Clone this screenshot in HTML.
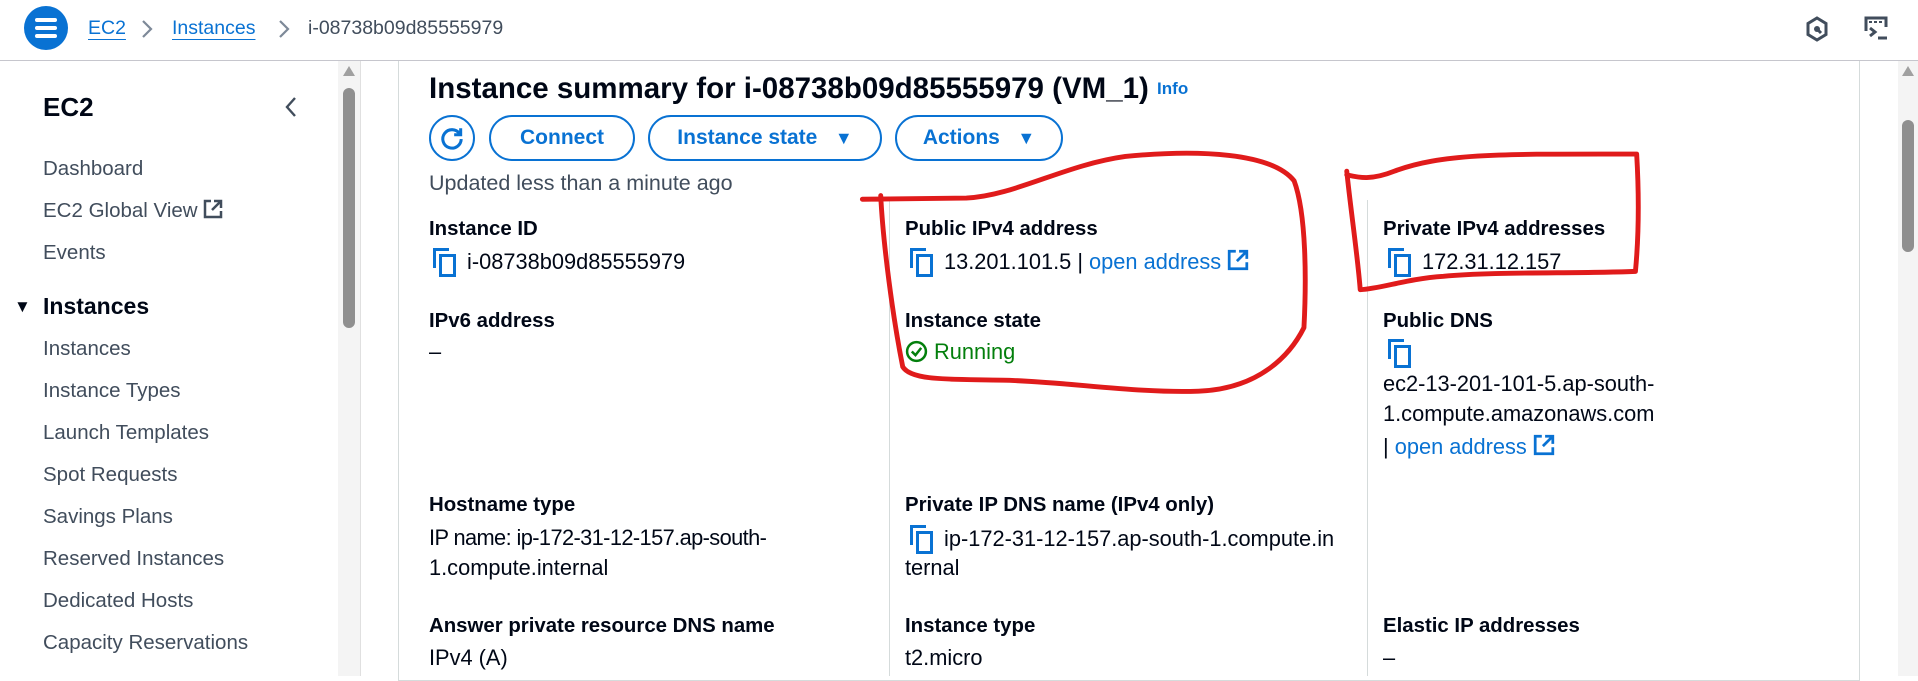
<!DOCTYPE html>
<html><head><meta charset="utf-8"><style>
*{margin:0;padding:0;box-sizing:border-box}
body{width:1918px;height:676px;overflow:hidden;background:#fff;font-family:"Liberation Sans",Arial,sans-serif;color:#000716;position:relative}
.a{position:absolute;white-space:nowrap}
.nav{font-size:20.5px;color:#414d5c;left:43px}
.lbl{font-size:20.4px;font-weight:bold}
.val{font-size:21.8px}
.lnk{color:#0972d3}
.btn{position:absolute;top:115px;height:46px;border:2.5px solid #0972d3;border-radius:23px;color:#0972d3;font-weight:bold;font-size:20px;display:flex;align-items:center;justify-content:center}
.cp{display:inline-block;width:22px;height:24px;position:relative;vertical-align:-3px;margin-right:12px}
.cp:before{content:"";position:absolute;left:0;top:0;width:13px;height:17px;border-left:3px solid #0972d3;border-top:3px solid #0972d3}
.cp:after{content:"";position:absolute;left:6px;top:6px;width:11px;height:17px;border:3px solid #0972d3}
</style></head><body>
<!-- header -->
<div class="a" style="left:24px;top:6px;width:44px;height:44px;border-radius:50%;background:#0972d3"></div>
<div class="a" style="left:35px;top:18px;width:22px;height:4px;background:#fff;border-radius:2px"></div>
<div class="a" style="left:35px;top:26px;width:22px;height:4px;background:#fff;border-radius:2px"></div>
<div class="a" style="left:35px;top:34px;width:22px;height:4px;background:#fff;border-radius:2px"></div>
<div class="a lnk" style="left:88px;top:17px;font-size:19.5px;text-decoration:underline;text-underline-offset:5px">EC2</div>
<svg class="a" style="left:141px;top:19px" width="12" height="20" viewBox="0 0 12 20"><path d="M2 2 L10 10 L2 18" fill="none" stroke="#7d8998" stroke-width="2.2"/></svg>
<div class="a lnk" style="left:172px;top:17px;font-size:19.5px;text-decoration:underline;text-underline-offset:5px">Instances</div>
<svg class="a" style="left:278px;top:19px" width="12" height="20" viewBox="0 0 12 20"><path d="M2 2 L10 10 L2 18" fill="none" stroke="#7d8998" stroke-width="2.2"/></svg>
<div class="a" style="left:308px;top:17px;font-size:19.5px;color:#414d5c">i-08738b09d85555979</div>
<svg class="a" style="left:1805px;top:16px" width="24" height="26" viewBox="0 0 24 26"><path d="M12 2 L21 7.5 V18.5 L12 24 L3 18.5 V7.5Z" fill="none" stroke="#414d5c" stroke-width="3"/><circle cx="12" cy="13" r="3" fill="#414d5c"/><path d="M12 13 L16 17" stroke="#414d5c" stroke-width="3"/></svg>
<svg class="a" style="left:1862px;top:15px" width="30" height="28" viewBox="0 0 30 28"><path d="M4 16 V3 H24 V12" fill="none" stroke="#414d5c" stroke-width="3"/><rect x="7" y="6" width="3" height="2" fill="#414d5c"/><rect x="12" y="6" width="3" height="2" fill="#414d5c"/><rect x="17" y="6" width="3" height="2" fill="#414d5c"/><path d="M8 13 L13 17 L8 21" fill="none" stroke="#414d5c" stroke-width="3"/><path d="M16 23 H25" stroke="#414d5c" stroke-width="3"/></svg>
<div class="a" style="left:0;top:60px;width:1918px;height:1px;background:#c6c6cd"></div>
<!-- sidebar -->
<div class="a" style="left:43px;top:92px;font-size:26px;font-weight:bold">EC2</div>
<svg class="a" style="left:284px;top:96px" width="14" height="22" viewBox="0 0 14 22"><path d="M11 2 L3 11 L11 20" fill="none" stroke="#414d5c" stroke-width="2.4"/></svg>
<div class="a nav" style="top:157px">Dashboard</div>
<div class="a nav" style="top:199px">EC2 Global View <svg width="20" height="20" viewBox="0 0 20 20" style="vertical-align:-2px"><path d="M8 2 H2 V18 H18 V12" fill="none" stroke="#414d5c" stroke-width="2.5"/><path d="M11 2 H18 V9 M18 2 L9 11" fill="none" stroke="#414d5c" stroke-width="2.5"/></svg></div>
<div class="a nav" style="top:241px">Events</div>
<div class="a" style="left:14px;top:297px;font-size:17px">&#9660;</div>
<div class="a" style="left:43px;top:293px;font-size:23px;font-weight:bold">Instances</div>
<div class="a nav" style="top:337px">Instances</div>
<div class="a nav" style="top:379px">Instance Types</div>
<div class="a nav" style="top:421px">Launch Templates</div>
<div class="a nav" style="top:463px">Spot Requests</div>
<div class="a nav" style="top:505px">Savings Plans</div>
<div class="a nav" style="top:547px">Reserved Instances</div>
<div class="a nav" style="top:589px">Dedicated Hosts</div>
<div class="a nav" style="top:631px">Capacity Reservations</div>
<div class="a" style="left:338px;top:61px;width:22px;height:615px;background:#f4f4f4"></div>
<div class="a" style="left:343px;top:66px;width:0;height:0;border-left:6px solid transparent;border-right:6px solid transparent;border-bottom:10px solid #a0a0a0"></div>
<div class="a" style="left:343px;top:88px;width:12px;height:240px;border-radius:6px;background:#8f8f8f"></div>
<div class="a" style="left:360px;top:61px;width:1px;height:615px;background:#e0e0e0"></div>
<!-- card -->
<div class="a" style="left:398px;top:61px;width:1462px;height:620px;border:1px solid #d5dbdb;border-top:none"></div>
<div class="a" style="left:429px;top:72px;font-size:29.5px;font-weight:bold">Instance summary for i-08738b09d85555979 (VM_1) <span style="font-size:17px;color:#0972d3;vertical-align:4px">Info</span></div>
<div class="btn" style="left:429px;width:46px;border-radius:50%"><svg width="26" height="26" viewBox="0 0 24 24"><path d="M19 8 A8.5 8.5 0 1 0 20.5 13" fill="none" stroke="#0972d3" stroke-width="2.8"/><path d="M20 3 V9 H14" fill="none" stroke="#0972d3" stroke-width="2.8"/></svg></div>
<div class="btn" style="left:489px;width:146px;font-size:21px">Connect</div>
<div class="btn" style="left:648px;width:234px;font-size:21px">Instance state&nbsp;&nbsp;&nbsp;<span style="font-size:18px">&#9660;</span></div>
<div class="btn" style="left:895px;width:168px;font-size:21px">Actions&nbsp;&nbsp;&nbsp;<span style="font-size:18px">&#9660;</span></div>
<div class="a" style="left:429px;top:171px;font-size:21.5px;color:#414d5c">Updated less than a minute ago</div>
<div class="a" style="left:889px;top:200px;width:1px;height:476px;background:#d5dbdb"></div>
<div class="a" style="left:1367px;top:200px;width:1px;height:476px;background:#d5dbdb"></div>
<!-- col1 -->
<div class="a lbl" style="left:429px;top:218px">Instance ID</div>
<div class="a val" style="left:433px;top:248px"><span class="cp"></span>i-08738b09d85555979</div>
<div class="a lbl" style="left:429px;top:310px">IPv6 address</div>
<div class="a val" style="left:429px;top:339px">–</div>
<div class="a lbl" style="left:429px;top:494px">Hostname type</div>
<div class="a val" style="left:429px;top:525px;letter-spacing:-0.6px">IP name: ip-172-31-12-157.ap-south-</div>
<div class="a val" style="left:429px;top:555px">1.compute.internal</div>
<div class="a lbl" style="left:429px;top:615px">Answer private resource DNS name</div>
<div class="a val" style="left:429px;top:645px">IPv4 (A)</div>
<!-- col2 -->
<div class="a lbl" style="left:905px;top:218px">Public IPv4 address</div>
<div class="a val" style="left:910px;top:248px"><span class="cp"></span>13.201.101.5 | <span class="lnk">open address <svg width="22" height="22" viewBox="0 0 20 20" style="vertical-align:-2px"><path d="M8 2 H2 V18 H18 V12" fill="none" stroke="#0972d3" stroke-width="2.5"/><path d="M11 2 H18 V9 M18 2 L9 11" fill="none" stroke="#0972d3" stroke-width="2.5"/></svg></span></div>
<div class="a lbl" style="left:905px;top:310px">Instance state</div>
<div class="a val" style="left:905px;top:339px;color:#037f0c"><svg width="23" height="23" viewBox="0 0 22 22" style="vertical-align:-4px"><circle cx="11" cy="11" r="9" fill="none" stroke="#037f0c" stroke-width="2.4"/><path d="M6.5 11 L10 14.5 L15.5 7.5" fill="none" stroke="#037f0c" stroke-width="2.4"/></svg> Running</div>
<div class="a lbl" style="left:905px;top:494px">Private IP DNS name (IPv4 only)</div>
<div class="a val" style="left:910px;top:525px"><span class="cp"></span>ip-172-31-12-157.ap-south-1.compute.in</div>
<div class="a val" style="left:905px;top:555px">ternal</div>
<div class="a lbl" style="left:905px;top:615px">Instance type</div>
<div class="a val" style="left:905px;top:645px">t2.micro</div>
<!-- col3 -->
<div class="a lbl" style="left:1383px;top:218px">Private IPv4 addresses</div>
<div class="a val" style="left:1388px;top:248px"><span class="cp"></span>172.31.12.157</div>
<div class="a lbl" style="left:1383px;top:310px">Public DNS</div>
<div class="a val" style="left:1388px;top:339px"><span class="cp"></span></div>
<div class="a val" style="left:1383px;top:371px">ec2-13-201-101-5.ap-south-</div>
<div class="a val" style="left:1383px;top:401px">1.compute.amazonaws.com</div>
<div class="a val" style="left:1383px;top:434px">| <span class="lnk">open address <svg width="22" height="22" viewBox="0 0 20 20" style="vertical-align:-2px"><path d="M8 2 H2 V18 H18 V12" fill="none" stroke="#0972d3" stroke-width="2.5"/><path d="M11 2 H18 V9 M18 2 L9 11" fill="none" stroke="#0972d3" stroke-width="2.5"/></svg></span></div>
<div class="a lbl" style="left:1383px;top:615px">Elastic IP addresses</div>
<div class="a val" style="left:1383px;top:645px">–</div>
<!-- right scrollbar -->
<div class="a" style="left:1898px;top:61px;width:20px;height:615px;background:#f4f4f4"></div>
<div class="a" style="left:1902px;top:66px;width:0;height:0;border-left:6px solid transparent;border-right:6px solid transparent;border-bottom:10px solid #a0a0a0"></div>
<div class="a" style="left:1902px;top:120px;width:12px;height:132px;border-radius:6px;background:#8f8f8f"></div>
<!-- red annotations -->
<svg class="a" style="left:0;top:0" width="1918" height="676" viewBox="0 0 1568 553" preserveAspectRatio="none">
<g fill="none" stroke="#e01b1b" stroke-width="4" stroke-linecap="round" stroke-linejoin="round">
<path d="M705 163 L790 162 C830 160 870 135 920 128 C980 122 1040 125 1058 148 C1068 175 1068 230 1066 268 C1055 290 1030 318 980 320 C930 322 870 312 820 311 C780 310 745 312 738 300 C730 260 722 200 720 160"/>
<path d="M1101 143 C1110 145 1120 148 1140 140 C1180 125 1230 126 1338 126 C1340 160 1340 190 1337 222 C1290 224 1220 222 1180 226 C1150 228 1130 236 1112 237 C1110 210 1104 170 1101 140"/>
</g></svg>
</body></html>
